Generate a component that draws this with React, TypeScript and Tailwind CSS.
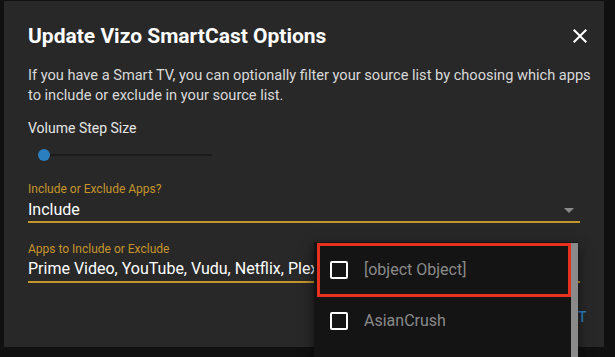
import React from "react";

const font = { fontFamily: "Roboto, 'Liberation Sans', sans-serif" };

function CloseIcon() {
  return (
    <svg viewBox="0 0 24 24" className="h-6 w-6" fill="#ffffff">
      <path d="M19 6.41 17.59 5 12 10.59 6.41 5 5 6.41 10.59 12 5 17.59 6.41 19 12 13.41 17.59 19 19 17.59 13.41 12z" />
    </svg>
  );
}

function ArrowDrop() {
  return (
    <svg viewBox="0 0 24 24" className="h-6 w-6" fill="#8a8a8a">
      <path d="M7 10l5 5 5-5z" />
    </svg>
  );
}

function Box() {
  return <div className="h-[18px] w-[18px] rounded-[2px] border-2 border-white" />;
}

export default function App() {
  return (
    <div
      className="relative h-[357px] w-[615px] overflow-hidden bg-[#101010] pl-[4px] pt-[1px]"
      style={font}
    >
      <div className="flex h-[346px] w-[600px] flex-col bg-[#282828] px-[24px]">
        {/* title */}
        <div className="mt-[19px] flex h-[32px] items-center justify-between">
          <div className="text-[21px] font-bold leading-[32px] text-white">
            Update Vizo SmartCast Options
          </div>
          <div className="-mr-[12px]">
            <CloseIcon />
          </div>
        </div>

        <p className="-mr-[24px] mt-[13px] whitespace-nowrap text-[14.6px] leading-[20px] text-[#dadada]">
          If you have a Smart TV, you can optionally filter your source list by choosing which apps
          <br />
          to include or exclude in your source list.
        </p>

        <div className="mt-[13px] text-[14px] leading-[20px] text-[#e6e6e6]">Volume Step Size</div>

        {/* slider */}
        <div className="relative ml-[16px] mt-[7px] flex h-[20px] w-[168px] items-center">
          <div className="h-[2px] w-full bg-[#1c1c1c]" />
          <div className="absolute -left-[6px] top-[4px] h-[12px] w-[12px] rounded-full bg-[#2a7fc0]" />
        </div>

        {/* select 1 */}
        <div className="mt-[16px] text-[12px] leading-[16px] text-[#c5952c]">Include or Exclude Apps?</div>
        <div className="box-content flex h-[24px] items-center justify-between border-b-2 border-[#c5952c]">
          <span className="mt-[2px] text-[16px] leading-[24px] text-white">Include</span>
          <span className="-mr-[1px] mt-[2px]">
            <ArrowDrop />
          </span>
        </div>

        {/* select 2 */}
        <div className="mt-[18px] text-[12px] leading-[16px] text-[#c5952c]">Apps to Include or Exclude</div>
        <div className="box-content flex h-[24px] items-center border-b-2 border-[#c5952c]">
          <span className="whitespace-nowrap text-[16px] leading-[24px] text-white">
            Prime Video, YouTube, Vudu, Netflix, Plex, Hulu
          </span>
        </div>

        <div className="-mr-[7px] mt-[24px] flex justify-end">
          <span className="text-[14px] font-medium uppercase leading-[20px] tracking-[0.4px] text-[#2b7fbf]">
            Submit
          </span>
        </div>
      </div>

      {/* dropdown menu */}
      <div className="absolute left-[314px] top-[242px] flex h-[130px] w-[264px] bg-[#141414] shadow-[0_4px_12px_rgba(0,0,0,0.6)]">
        <div className="w-[257px] pt-[1px]">
          <div className="ml-[3px] flex h-[54px] w-[254px] items-center border-[3px] border-[#e5321f] pl-[10px]">
            <Box />
            <span className="ml-[16px] text-[16px] text-[#8a8a8a]">[object Object]</span>
          </div>
          <div className="flex h-[48px] items-center pl-[16px]">
            <Box />
            <span className="ml-[16px] text-[16px] text-[#8a8a8a]">AsianCrush</span>
          </div>
        </div>
        <div className="mt-[1px] w-[7px] bg-[#8a8a8a]" />
      </div>
    </div>
  );
}
